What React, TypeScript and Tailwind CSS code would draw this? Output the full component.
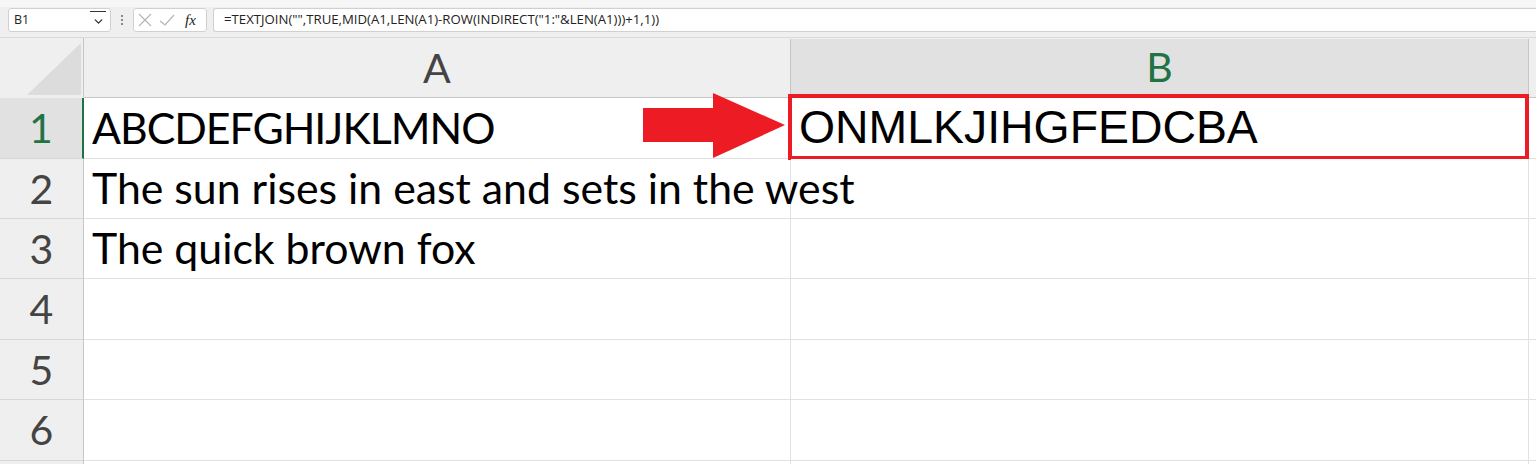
import { ChevronDown } from 'lucide-react'

const rows = [
  { n: 1, a: 'ABCDEFGHIJKLMNO', h: 'h-[61px]', tr: 'tracking-[-1px]' },
  { n: 2, a: 'The sun rises in east and sets in the west', h: 'h-[60px]', tr: '' },
  { n: 3, a: 'The quick brown fox', h: 'h-[60px]', tr: '' },
  { n: 4, a: '', h: 'h-[61px]', tr: '' },
  { n: 5, a: '', h: 'h-[60px]', tr: '' },
  { n: 6, a: '', h: 'h-[61px]', tr: '' },
]

const cellFont = { fontFamily: 'Lato, "Open Sans", sans-serif' }

export default function App() {
  return (
    <div className="w-[1536px] h-[464px] overflow-hidden bg-[#efefef] relative" style={{ fontFamily: '"Noto Sans", sans-serif' }}>
      {/* Formula bar */}
      <div className="h-[38px] border-t-[7px] border-[#f6f6f6] flex items-start pt-[1px] border-b border-b-[#dadada]">
        <div className="ml-[8px] w-[103px] h-[24px] bg-white border border-[#d0d0d0] rounded-[3px] flex items-center justify-between pl-[5px] pr-[4px]">
          <span className="text-[12.5px] text-[#222]" style={{ fontFamily: '"Open Sans", sans-serif' }}>B1</span>
          <div className="flex flex-col items-center -mt-[2px]">
            <div className="w-[16px] h-[1px] bg-[#333]" />
            <ChevronDown size={13} strokeWidth={2.5} className="text-[#333] mt-[3px]" />
          </div>
        </div>
        <div className="w-[22px] h-[24px] flex flex-col items-center justify-center gap-[2px]">
          <div className="w-[2px] h-[2px] bg-[#888]" />
          <div className="w-[2px] h-[2px] bg-[#888]" />
          <div className="w-[2px] h-[2px] bg-[#888]" />
        </div>
        <div className="w-[74px] h-[24px] bg-white border border-[#d0d0d0] rounded-[3px] flex items-center pl-[4px] gap-[7px]">
          <svg width="14" height="14" viewBox="0 0 14 14">
            <path d="M1 1 L13 13 M13 1 L1 13" stroke="#b5b5b5" strokeWidth="1.2" />
          </svg>
          <svg width="16" height="14" viewBox="0 0 16 14">
            <path d="M1 8 L6 12 L15 2" stroke="#b5b5b5" strokeWidth="1.2" fill="none" />
          </svg>
          <span className="text-[15px] italic text-[#222] ml-[3px]" style={{ fontFamily: '"Liberation Serif", serif' }}>
            fx
          </span>
        </div>
        <div className="ml-[6px] flex-1 h-[24px] bg-white border border-[#d0d0d0] rounded-l-[3px] border-r-0 flex items-center pl-[10px]">
          <span className="text-[13.2px] text-[#222]" style={{ fontFamily: '"Open Sans", sans-serif' }}>
            =TEXTJOIN("",TRUE,MID(A1,LEN(A1)-ROW(INDIRECT("1:"&LEN(A1)))+1,1))
          </span>
        </div>
      </div>

      {/* Grid */}
      <div className="grid grid-cols-[84px_707px_738px_1fr]">
        {/* header row */}
        <div className="h-[59px] flex items-end justify-end pr-[2px] pb-[2px] border-r border-[#c6c6c6]">
          <svg width="54" height="52" viewBox="0 0 54 52">
            <polygon points="54,0 54,52 0,52" fill="#dcdcdc" />
          </svg>
        </div>
        <div className="h-[59px] mt-[1px] flex items-center justify-center border-r border-[#c6c6c6] border-b border-b-[#c6c6c6] text-[41px] text-[#444]" style={cellFont}>
          A
        </div>
        <div className="h-[58px] mt-[1px] bg-[#e1e1e1] flex items-center justify-center border-r border-[#c6c6c6] border-b-2 border-b-[#217346] text-[41px] text-[#217346]" style={cellFont}>
          B
        </div>
        <div className="h-[59px] mt-[1px] border-b border-[#c6c6c6]" />

        {rows.map((r) => (
          <Row key={r.n} n={r.n} a={r.a} h={r.h} tr={r.tr} />
        ))}
        <div className="h-[4px] border-r border-[#c6c6c6]" />
        <div className="h-[4px] bg-white border-r border-[#e1e1e1]" />
        <div className="h-[4px] bg-white border-r border-[#e1e1e1]" />
        <div className="h-[4px] bg-white" />
      </div>

      {/* Arrow */}
      <svg className="absolute left-[643px] top-[93px] z-20" width="144" height="66" viewBox="0 0 144 66">
        <polygon points="0,15 70,15 70,0 142,32 70,65 70,49 0,49" fill="#ed1c24" />
      </svg>
    </div>
  )
}

function Row({ n, a, h, tr }: { n: number; a: string; h: string; tr: string }) {
  const sel = n === 1
  return (
    <>
      <div
        className={`${h} flex items-center justify-center text-[41px] border-b border-[#d6d6d6] ${
          sel ? 'bg-[#e1e1e1] text-[#217346] border-r-2 border-r-[#217346]' : 'text-[#444] border-r border-r-[#c6c6c6]'
        }`}
        style={cellFont}
      >
        {n}
      </div>
      <div className={`${h} bg-white border-r border-b border-[#e1e1e1] flex items-center`}>
        <span className={`relative z-10 pl-[8px] whitespace-nowrap text-[42.8px] text-black leading-none ${tr}`} style={cellFont}>
          {a}
        </span>
      </div>
      <div className={`${h} bg-white border-r border-b border-[#e1e1e1] relative`}>
        {sel && (
          <div className="absolute -left-[3px] -top-[4px] -right-[1px] -bottom-[2px] border-[4px] border-[#ed1c24] flex items-center">
            <span className="pl-[7px] text-[46.4px] text-black leading-none" style={{ fontFamily: '"Liberation Sans", Arial, sans-serif' }}>
              ONMLKJIHGFEDCBA
            </span>
          </div>
        )}
      </div>
      <div className={`${h} bg-white border-b border-[#e1e1e1]`} />
    </>
  )
}
